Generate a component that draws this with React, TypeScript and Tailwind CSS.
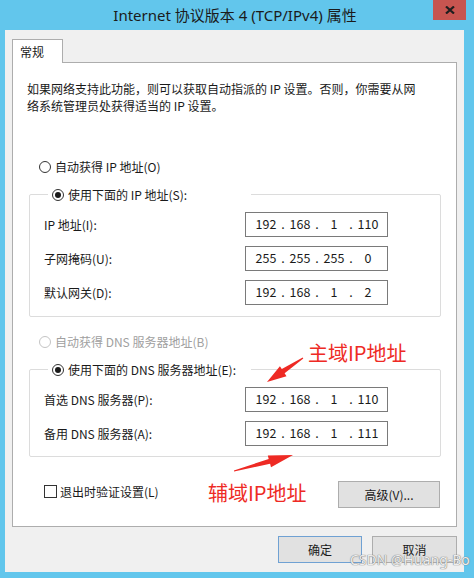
import React, { Fragment } from "react";

function Radio({ checked, disabled }: { checked?: boolean; disabled?: boolean }) {
  return (
    <span
      className={
        disabled
          ? "inline-flex w-[12px] h-[12px] shrink-0 rounded-full border border-[#c4c4c4] bg-white items-center justify-center"
          : "inline-flex w-[12px] h-[12px] shrink-0 rounded-full border border-[#333333] bg-white items-center justify-center"
      }
    >
      {checked && <span className="w-[6px] h-[6px] rounded-full bg-[#1a1a1a]" />}
    </span>
  );
}

function IpField({ parts }: { parts: string[] }) {
  return (
    <div className="w-[143px] h-[25px] border border-[#7a7a7a] bg-white flex items-center pl-[6px] text-[12.5px] text-[#1a1a1a] leading-none">
      {parts.map((p, i) => (
        <Fragment key={i}>
          {i > 0 && <span className="w-[6px] text-center">.</span>}
          <span className="w-[28px] text-center">{p}</span>
        </Fragment>
      ))}
    </div>
  );
}

function Row({ label, parts }: { label: string; parts: string[] }) {
  return (
    <div className="flex items-center">
      <span className="w-[201px] text-[12px] text-[#1a1a1a]">{label}</span>
      <IpField parts={parts} />
    </div>
  );
}

export default function App() {
  return (
    <div className="relative w-[474px] h-[578px] bg-[#62c6ec] flex flex-col overflow-hidden font-['Noto_Sans_CJK_SC','Noto_Sans',sans-serif] text-[12px] leading-[17px] text-[#1a1a1a]">
      {/* title bar */}
      <div className="relative h-[30px] shrink-0 flex items-center justify-center">
        <span className="text-[15px] text-[#1b1b1b] font-['Noto_Sans','Noto_Sans_CJK_SC',sans-serif] mr-[4px]">
          Internet 协议版本 4 (TCP/IPv4) 属性
        </span>
        <div className="absolute top-0 right-[8px] w-[33px] h-[20px] bg-[#c75550] flex items-center justify-center">
          <svg width="10" height="8" viewBox="0 0 10 8">
            <path d="M1 0.5 L9 7.5 M9 0.5 L1 7.5" stroke="#1e1e1e" strokeWidth="2.2" />
          </svg>
        </div>
      </div>

      {/* client */}
      <div className="ml-[5px] w-[459px] h-[542px] bg-[#f0f0f0] px-[7px] pt-[9px] flex flex-col">
        {/* tab */}
        <div className="relative z-10 -mb-px w-[51px] h-[24px] bg-white border-l border-t border-r border-[#adadad] pl-[7px] pt-[3px] text-[12px]">
          常规
        </div>
        {/* panel */}
        <div className="h-[465px] border border-[#adadad] bg-white flex flex-col">
          <div className="mt-[17px] pl-[14px] text-[12px] leading-[17px]">
            <div>如果网络支持此功能，则可以获取自动指派的 IP 设置。否则，你需要从网</div>
            <div>络系统管理员处获得适当的 IP 设置。</div>
          </div>

          <div className="mt-[44px] pl-[26px] h-[17px] flex items-center gap-[4px]">
            <Radio />
            <span>自动获得 IP 地址(O)</span>
          </div>

          <fieldset className="mt-[11px] ml-[16px] w-[412px] border border-[#dcdcdc] rounded-[2px] pt-[9px] pb-[11px] pl-[14px] flex flex-col gap-[9px]">
            <legend className="ml-[4px] px-[4px] w-[203px] h-[17px] flex items-center gap-[4px]">
              <Radio checked />
              <span>使用下面的 IP 地址(S):</span>
            </legend>
            <Row label="IP 地址(I):" parts={["192", "168", "1", "110"]} />
            <Row label="子网掩码(U):" parts={["255", "255", "255", "0"]} />
            <Row label="默认网关(D):" parts={["192", "168", "1", "2"]} />
          </fieldset>

          <div className="mt-[16px] pl-[26px] h-[17px] flex items-center gap-[4px] text-[#a0a0a0]">
            <Radio disabled />
            <span>自动获得 DNS 服务器地址(B)</span>
          </div>

          <fieldset className="mt-[11px] ml-[16px] w-[412px] border border-[#dcdcdc] rounded-[2px] pt-[9px] pb-[10px] pl-[14px] flex flex-col gap-[9px]">
            <legend className="ml-[4px] px-[4px] w-[203px] h-[17px] flex items-center gap-[4px]">
              <Radio checked />
              <span>使用下面的 DNS 服务器地址(E):</span>
            </legend>
            <Row label="首选 DNS 服务器(P):" parts={["192", "168", "1", "110"]} />
            <Row label="备用 DNS 服务器(A):" parts={["192", "168", "1", "111"]} />
          </fieldset>

          <div className="mt-[24px] ml-[16px] w-[411px] pl-[15px] flex items-center justify-between">
            <div className="flex items-center gap-[3px] mt-[-7px]">
              <span className="w-[13px] h-[13px] border border-[#333333] bg-white" />
              <span>退出时验证设置(L)</span>
            </div>
            <div className="w-[102px] h-[27px] border border-[#adadad] bg-[#e1e1e1] flex items-center justify-center">
              高级(V)...
            </div>
          </div>
        </div>

        {/* bottom buttons */}
        <div className="mt-[9px] flex justify-end gap-[10px]">
          <div className="w-[84px] h-[27px] border border-[#6fa1d3] bg-[#e1e1e1] flex items-center justify-center">
            确定
          </div>
          <div className="w-[85px] h-[27px] border border-[#adadad] bg-[#e1e1e1] flex items-center justify-center">
            取消
          </div>
        </div>
      </div>

      {/* annotations */}
      <div className="absolute left-[308px] top-[339px] text-[20px] leading-[28px] text-[#ee2a24] whitespace-nowrap">
        主域IP地址
      </div>
      <div className="absolute left-[208px] top-[479px] text-[20px] leading-[28px] text-[#ee2a24] whitespace-nowrap">
        辅域IP地址
      </div>
      <svg className="absolute left-0 top-0 pointer-events-none" width="474" height="578" viewBox="0 0 474 578">
        <polygon
          points="302.7,357.6 281.8,369.1 279.9,366.2 267,382 286.5,376.2 284.6,373.3 303.3,358.4"
          fill="#ee2a24"
        />
        <polygon
          points="233.9,470.5 268.7,459.0 267.8,455.6 293,455 271.0,467.2 270.1,463.8 234.1,471.5"
          fill="#ee2a24"
        />
      </svg>
      <div className="absolute left-[350px] top-[551px] text-[14px] leading-[18px] text-[#eeeeee] whitespace-nowrap font-['Noto_Sans',sans-serif] [text-shadow:0_0_1px_#777,0_0_1px_#777]">
        CSDN @Huang-Bo
      </div>
    </div>
  );
}
